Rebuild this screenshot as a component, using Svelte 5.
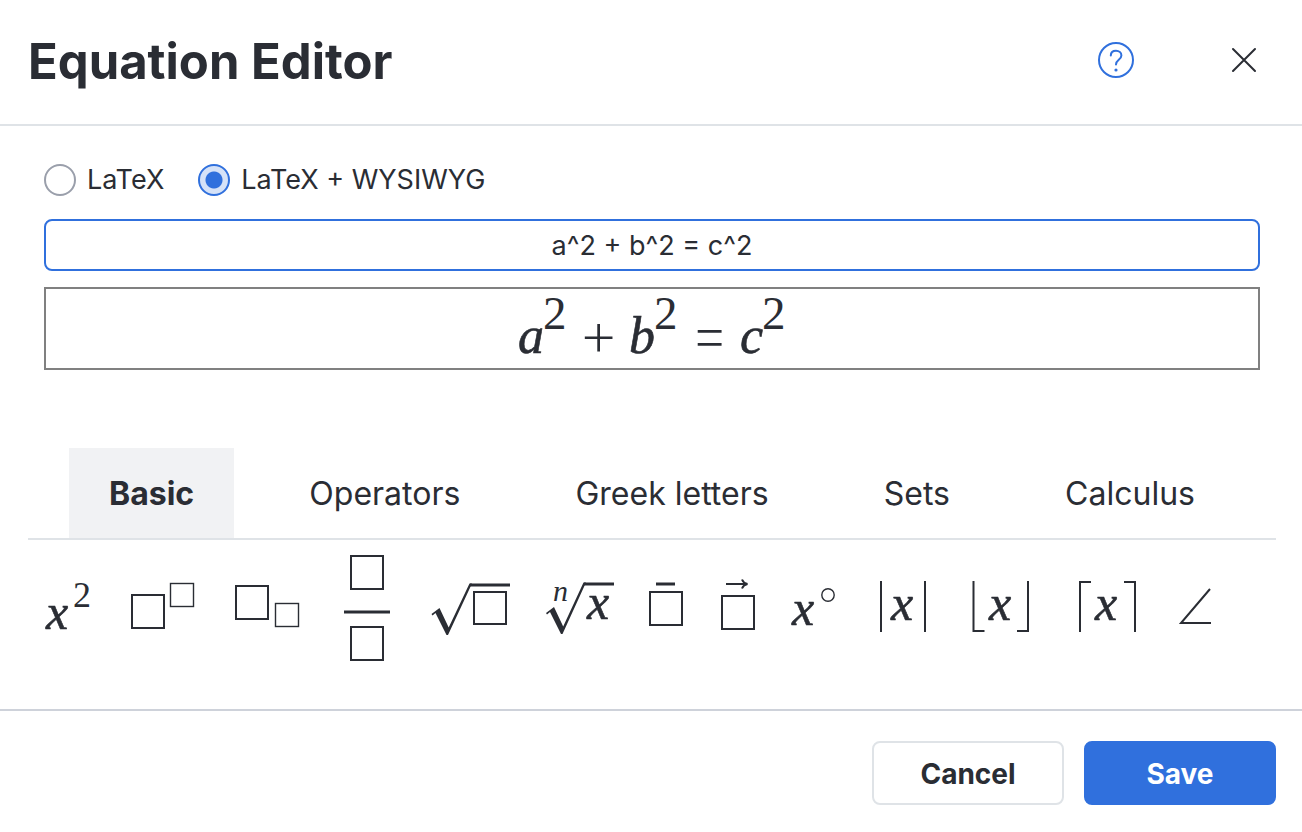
<script>
  let mode = $state('wysiwyg');
  let latex = $state('a^2 + b^2 = c^2');
  let active = $state('Basic');
  const tabs = ['Basic', 'Operators', 'Greek letters', 'Sets', 'Calculus'];
  const symbols = [
    { name: 'Square', width: 84 },
    { name: 'Superscript', width: 105 },
    { name: 'Subscript', width: 106 },
    { name: 'Fraction', width: 90 },
    { name: 'Square root', width: 117 },
    { name: 'Nth root', width: 103 },
    { name: 'Overline', width: 71 },
    { name: 'Vector', width: 71 },
    { name: 'Degree', width: 84 },
    { name: 'Absolute value', width: 92 },
    { name: 'Floor', width: 105 },
    { name: 'Ceiling', width: 104 },
    { name: 'Angle', width: 74 }
  ];
</script>

{#snippet glyph(name)}
  {#if name === 'Square'}
    <text class="var" x="20" y="88">x</text>
    <text class="num" x="47" y="66">2</text>
  {:else if name === 'Superscript'}
    <rect x="22" y="54" width="32" height="33" />
    <rect class="thin" x="60.5" y="42.5" width="23" height="23" />
  {:else if name === 'Subscript'}
    <rect x="21" y="45" width="32" height="33" />
    <rect class="thin" x="60.5" y="62.5" width="23" height="23" />
  {:else if name === 'Fraction'}
    <rect x="30" y="15" width="32" height="33" />
    <path class="rule" d="M23 71h46" />
    <rect x="30" y="86" width="32" height="33" />
  {:else if name === 'Square root'}
    <path class="solid" d="M21.500 74.500l-1-1.500 8-6 9.200 19.500L58.500 42.500h2.500L37 94h-1.500L24.500 72z" />
    <path class="rule" d="M59 44h40" />
    <rect x="63" y="51" width="32" height="32" />
  {:else if name === 'Nth root'}
    <text class="index" x="25" y="60">n</text>
    <path class="solid" d="M19 73.500l-1-1.500 8-6 9.200 19.500L55.500 41.500h2.500L34.500 93H33L22 71z" />
    <path class="rule" d="M56 43h30" />
    <text class="var" x="59" y="78">x</text>
  {:else if name === 'Overline'}
    <path class="rule" d="M25 43h19" />
    <rect x="19" y="51" width="32" height="33" />
  {:else if name === 'Vector'}
    <path d="M24 43h21M40 38.500c1 2.500 3 4 5.500 4.500-2.500.5-4.500 2-5.500 4.500" />
    <rect x="20" y="55" width="32" height="33" />
  {:else if name === 'Degree'}
    <text class="var" x="19" y="84">x</text>
    <circle class="thin" cx="55" cy="54" r="6.200" />
  {:else if name === 'Absolute value'}
    <path d="M24 40v51M68 40v51" />
    <text class="var" x="34" y="79">x</text>
  {:else if name === 'Floor'}
    <path d="M24.500 40v50h11M79 40v50h-11" />
    <text class="var" x="40" y="79">x</text>
  {:else if name === 'Ceiling'}
    <path d="M26 91V41h11M81 91V41h-11" />
    <text class="var" x="41" y="79">x</text>
  {:else}
    <path d="M52 48L23 82h30" />
  {/if}
{/snippet}

<div class="dialog" role="dialog" aria-labelledby="title">
  <header>
    <h1 id="title">Equation Editor</h1>
    <div class="actions">
      <button class="icon" aria-label="Help">
        <svg width="40" height="40" viewBox="0 0 40 40" fill="none" stroke="#3070dd" stroke-width="2">
          <circle cx="20" cy="20" r="17" />
          <path d="M14.800 15.500c0-3 2.200-4.800 5.200-4.800s5.400 1.900 5.400 4.700c0 4.400-5.400 4.300-5.400 9" stroke-linecap="round" />
          <circle cx="20" cy="30" r="1.600" fill="#3070dd" stroke="none" />
        </svg>
      </button>
      <button class="icon" aria-label="Close">
        <svg width="40" height="40" viewBox="0 0 40 40" fill="none" stroke="#2a2d34" stroke-width="2">
          <path d="M9 9l22 22M31 9l-22 22" stroke-linecap="round" />
        </svg>
      </button>
    </div>
  </header>

  <main>
    <div class="editor">
      <div class="modes">
        <label><input type="radio" name="mode" value="latex" bind:group={mode} />LaTeX</label>
        <label><input type="radio" name="mode" value="wysiwyg" bind:group={mode} />LaTeX + WYSIWYG</label>
      </div>
      <input class="source" type="text" aria-label="LaTeX source" bind:value={latex} />
      <div class="preview">
        <svg width="280" height="87" viewBox="0 -4 280 87" role="img" aria-label="Equation preview">
          <text class="var large" x="6" y="64">a</text>
          <text class="power" x="31" y="40">2</text>
          <text class="op" x="66" y="67">+</text>
          <text class="var large" x="117" y="64">b</text>
          <text class="power" x="142" y="40">2</text>
          <text class="op" x="177" y="67">=</text>
          <text class="var large" x="228" y="64">c</text>
          <text class="power" x="250" y="40">2</text>
        </svg>
      </div>
    </div>

    <div class="tabs" role="tablist">
      {#each tabs as tab}
        <button role="tab" class:active={tab === active} aria-selected={tab === active} onclick={() => (active = tab)}>{tab}</button>
      {/each}
    </div>
    <div class="symbols" role="tabpanel">
      {#each symbols as s}
        <button class="symbol" aria-label={s.name}>
          <svg width={s.width} height="130" viewBox="0 0 {s.width} 130">{@render glyph(s.name)}</svg>
        </button>
      {/each}
    </div>
  </main>

  <footer>
    <button class="btn">Cancel</button>
    <button class="btn primary">Save</button>
  </footer>
</div>

<style>
  :global(body) {
    margin: 0;
    background: #fff;
  }
  .dialog {
    color: #2a2d34;
    font-family: Inter, sans-serif;
    font-size: 27px;
  }
  button,
  input {
    font: inherit;
    color: inherit;
    margin: 0;
    box-sizing: border-box;
  }
  button {
    border: 0;
    padding: 0;
    background: none;
    cursor: pointer;
  }
  svg {
    display: block;
  }
  header {
    display: flex;
    align-items: center;
    justify-content: space-between;
    padding: 32px 38px 32px 28px;
    border-bottom: 2px solid #dfe3e7;
  }
  h1 {
    margin: 0;
    font-size: 49px;
    line-height: 60px;
    font-weight: 700;
  }
  .actions {
    display: flex;
    gap: 88px;
    padding-bottom: 4px;
  }
  main {
    padding: 38px 26px 38px 28px;
  }
  .editor {
    padding: 0 16px;
  }
  .modes {
    display: flex;
    gap: 34px;
    line-height: 32px;
  }
  label {
    display: flex;
    align-items: center;
    gap: 11px;
  }
  input[type='radio'] {
    appearance: none;
    width: 32px;
    height: 32px;
    border: 2px solid #9a9fab;
    border-radius: 50%;
  }
  input[type='radio']:checked {
    border-color: #3070dd;
    background: radial-gradient(circle, #3070dd 8px, #d5e2f8 9px);
  }
  .source {
    display: block;
    width: 100%;
    height: 52px;
    margin-top: 23px;
    border: 2px solid #3070dd;
    border-radius: 8px;
    padding: 0 8px;
    text-align: center;
    outline: none;
  }
  .preview {
    display: flex;
    justify-content: center;
    margin-top: 16px;
    border: 2px solid #808080;
  }
  .preview svg {
    margin: -4px 0;
  }
  text {
    fill: #2a2d34;
    stroke: none;
    font-family: 'Liberation Serif', serif;
  }
  .var {
    font-size: 50px;
    font-style: italic;
    stroke: #2a2d34;
    stroke-width: 0.6;
  }
  .large {
    font-size: 52px;
  }
  .num {
    font-size: 36px;
  }
  .power {
    font-size: 47px;
  }
  .index {
    font-size: 30px;
    font-style: italic;
  }
  .op {
    font-family: Inter, sans-serif;
    font-size: 64px;
    font-weight: 200;
  }
  .tabs {
    display: flex;
    justify-content: space-between;
    margin-top: 78px;
    padding: 0 41px;
    border-bottom: 2px solid #dfe3e7;
  }
  .tabs button {
    padding: 2px 40px 0;
    font-size: 32px;
    line-height: 88px;
  }
  .tabs .active {
    background: #f1f2f4;
    font-weight: 700;
  }
  .symbols {
    display: flex;
    margin: 1px 0 0 -2px;
  }
  .symbol svg {
    fill: none;
    stroke: #2a2d34;
    stroke-width: 2;
  }
  .symbol .thin {
    stroke-width: 1.4;
  }
  .symbol .rule {
    stroke-width: 3;
  }
  .symbol .solid {
    fill: #2a2d34;
    stroke: none;
  }
  footer {
    display: flex;
    justify-content: flex-end;
    gap: 20px;
    padding: 30px 26px 27px;
    border-top: 2px solid #ced2da;
  }
  .btn {
    width: 192px;
    height: 64px;
    padding-top: 2px;
    border: 2px solid #dfe3e7;
    border-radius: 8px;
    font-size: 28px;
    font-weight: 700;
  }
  .primary {
    border-color: #3070dd;
    background: #3070dd;
    color: #fff;
  }
</style>
